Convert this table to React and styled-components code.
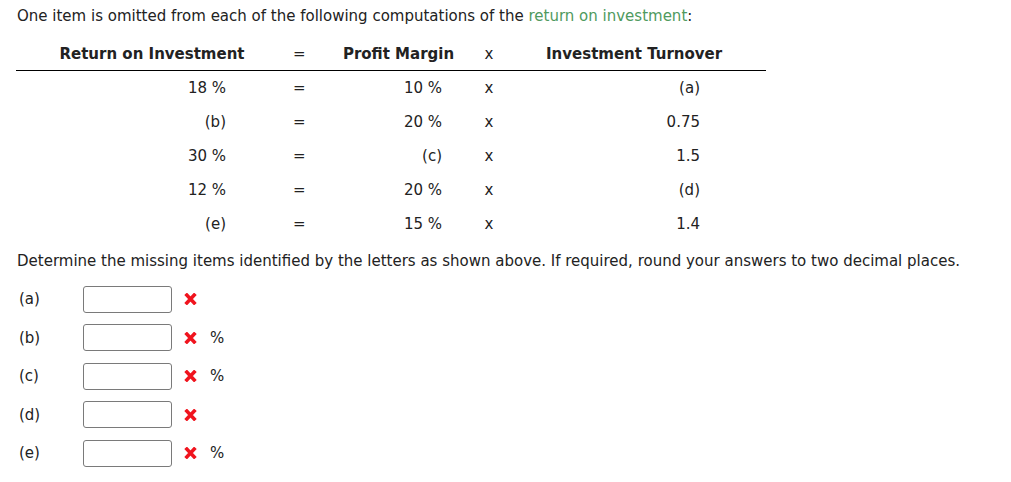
import styled, { createGlobalStyle } from "styled-components";

const GlobalStyle = createGlobalStyle`
    body {
        margin: 0;
        background: #fff;
        color: #222;
        font-family: "DejaVu Sans", Verdana, sans-serif;
        font-size: 15px;
    }
`;

const Page = styled.div`
    padding: 6px 16px 0 16px;
`;

const Intro = styled.p`
    margin: 0 0 0 1px;
    line-height: 20px;
`;

const Link = styled.span`
    color: #4f9a5e;
`;

const Formula = styled.div`
    display: grid;
    grid-template-columns: 272px 50px 121px 60px 247px;
    width: 750px;
    margin-top: 11px;
`;

const Head = styled.div`
    height: 33px;
    display: flex;
    align-items: center;
    justify-content: ${(p) => p.$justify || "center"};
    padding-left: ${(p) => p.$pl || 0}px;
    font-weight: ${(p) => (p.$plain ? "normal" : "bold")};
    border-bottom: 1px solid #000;
`;

const Cell = styled.div`
    height: 34px;
    display: flex;
    align-items: center;
    justify-content: ${(p) => p.$justify || "flex-end"};
    padding-right: ${(p) => p.$pr || 0}px;
    padding-left: ${(p) => p.$pl || 0}px;
`;

const Instruction = styled.p`
    margin: 10px 0 0 1px;
    line-height: 20px;
`;

const Answers = styled.div`
    display: flex;
    flex-direction: column;
    margin-top: 9px;
`;

const AnswerRow = styled.div`
    display: flex;
    align-items: center;
    height: 38.5px;
`;

const Label = styled.span`
    width: 64px;
    padding-left: 3px;
`;

const Box = styled.div`
    width: 87px;
    height: 25px;
    border: 1px solid #7a7a7a;
    border-radius: 3px;
    background: #fff;
`;

const Wrong = styled.svg`
    display: block;
    flex: none;
    margin-left: 12px;
    margin-right: 13px;
    width: 13px;
    height: 12px;
`;

const Unit = styled.span``;

const Cross = () => (
    <Wrong viewBox="0 0 13 12">
        <path d="M1.6 0.8 L11.4 11.2 M11.4 0.8 L1.6 11.2" stroke="#f0141e" strokeWidth="3.6" />
    </Wrong>
);

const rows = [
    ["18 %", "10 %", "(a)"],
    ["(b)", "20 %", "0.75"],
    ["30 %", "(c)", "1.5"],
    ["12 %", "20 %", "(d)"],
    ["(e)", "15 %", "1.4"],
];

const answers = [
    ["(a)", ""],
    ["(b)", "%"],
    ["(c)", "%"],
    ["(d)", ""],
    ["(e)", "%"],
];

const App = () => {
    return (
        <Page>
            <GlobalStyle />
            <Intro>
                One item is omitted from each of the following computations of the{" "}
                <Link>return on investment</Link>:
            </Intro>
            <Formula>
                <Head>Return on Investment</Head>
                <Head $justify="flex-start" $pl={5} $plain>=</Head>
                <Head>Profit Margin</Head>
                <Head $plain>x</Head>
                <Head $justify="flex-start" $pl={27}>Investment Turnover</Head>
                {rows.map((r, i) => [
                    <Cell key={i + "a"} $pr={62}>{r[0]}</Cell>,
                    <Cell key={i + "b"} $justify="flex-start" $pl={5}>=</Cell>,
                    <Cell key={i + "c"} $pr={17}>{r[1]}</Cell>,
                    <Cell key={i + "d"} $justify="center">x</Cell>,
                    <Cell key={i + "e"} $pr={66}>{r[2]}</Cell>,
                ])}
            </Formula>
            <Instruction>
                Determine the missing items identified by the letters as shown above. If required, round your answers to two decimal places.
            </Instruction>
            <Answers>
                {answers.map(([l, u]) => (
                    <AnswerRow key={l}>
                        <Label>{l}</Label>
                        <Box />
                        <Cross />
                        <Unit>{u}</Unit>
                    </AnswerRow>
                ))}
            </Answers>
        </Page>
    );
};

export default App;
